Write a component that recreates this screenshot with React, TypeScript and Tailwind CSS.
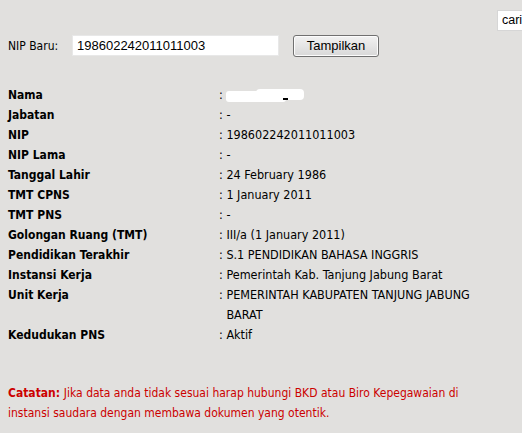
import React from "react";

const rows: [string, React.ReactNode][] = [
  ["Jabatan", "-"],
  ["NIP", "198602242011011003"],
  ["NIP Lama", "-"],
  ["Tanggal Lahir", "24 February 1986"],
  ["TMT CPNS", "1 January 2011"],
  ["TMT PNS", "-"],
  ["Golongan Ruang (TMT)", "III/a (1 January 2011)"],
  ["Pendidikan Terakhir", "S.1 PENDIDIKAN BAHASA INGGRIS"],
  ["Instansi Kerja", "Pemerintah Kab. Tanjung Jabung Barat"],
  ["Unit Kerja", "PEMERINTAH KABUPATEN TANJUNG JABUNG BARAT"],
  ["Kedudukan PNS", "Aktif"],
];

export default function App() {
  const font = { fontFamily: '"DejaVu Sans Condensed", "DejaVu Sans", sans-serif' };
  return (
    <div className="w-[522px] h-[433px] overflow-hidden bg-[#e1e0de] text-black" style={font}>
      <div className="flex justify-end pt-[10px]">
        <div className="w-[60px] h-[21px] -mr-[35px] bg-white border border-[#d6d6d6] pl-[4px] text-[12.5px] leading-[19px] font-['Liberation_Sans',sans-serif] text-black">
          cari
        </div>
      </div>
      <div className="flex items-center pl-[8px] mt-[3px] h-[23px]">
        <span className="text-[12px] w-[64px]">NIP Baru:</span>
        <div className="w-[207px] h-[21px] bg-white border border-[#e8e8e8] pl-[4px] text-[13px] leading-[19px] font-['Liberation_Sans',sans-serif]">
          198602242011011003
        </div>
        <button className="ml-[14px] w-[86px] h-[22px] rounded-[3px] border border-[#707070] bg-gradient-to-b from-[#f2f2f2] to-[#d8d8d8] text-[13px] leading-[20px] font-['Liberation_Sans',sans-serif] text-black shadow-[inset_0_0_0_1px_#fcfcfc]">
          Tampilkan
        </button>
      </div>
      <div className="mt-[28px] pl-[8px] grid grid-cols-[211px_272px] text-[12px] leading-[20px]">
        <div className="font-bold">Nama</div>
        <div className="flex items-center">
          <span className="text-[12.5px]">:&nbsp;</span>
          <span className="relative inline-block w-[78px] h-[13px] mt-[1px]">
            <span className="absolute left-0 top-[2px] w-[60px] h-[11px] bg-white rounded-[3px]" />
            <span className="absolute left-[30px] top-0 w-[48px] h-[11px] bg-white rounded-[4px]" />
            <span className="absolute left-[57px] top-[9px] w-[5px] h-[2px] bg-black" />
          </span>
        </div>
        {rows.map(([k, v]) => (
          <React.Fragment key={k}>
            <div className="font-bold">{k}</div>
            <div className="flex text-[12.5px]">
              <span>:&nbsp;</span>
              <span>{v}</span>
            </div>
          </React.Fragment>
        ))}
      </div>
      <p className="mt-[38px] pl-[8px] w-[500px] text-[12px] leading-[20px] text-[#cc0000]">
        <b>Catatan: </b>Jika data anda tidak sesuai harap hubungi BKD atau Biro Kepegawaian di instansi saudara dengan membawa dokumen yang otentik.
      </p>
    </div>
  );
}
